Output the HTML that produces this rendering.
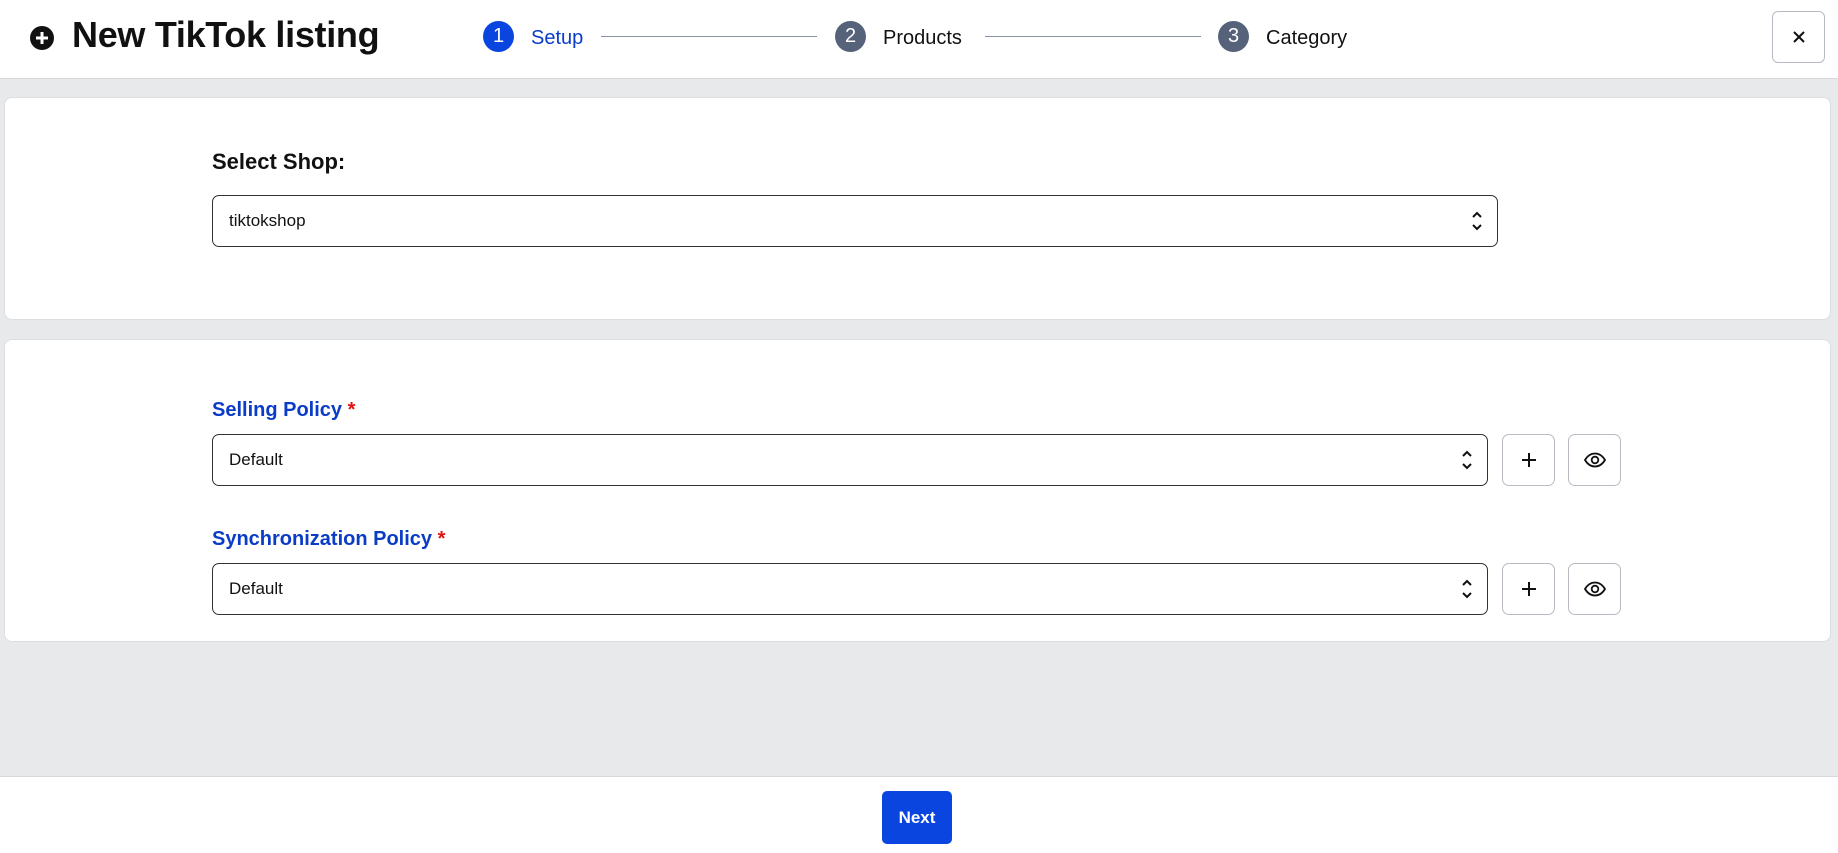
<!DOCTYPE html>
<html><head><meta charset="utf-8"><style>
*{box-sizing:border-box;margin:0;padding:0}
body{width:1838px;height:853px;background:#e8e9eb;font-family:"Liberation Sans",Arial,sans-serif;position:relative;overflow:hidden;color:#111}
.hdr{position:absolute;left:0;top:0;width:1838px;height:79px;background:#fff;border-bottom:1px solid #d6d8dc}
.abs{position:absolute}
.title{left:72px;top:14px;font-size:36px;font-weight:bold;color:#111;letter-spacing:-0.3px}
.circ{width:31px;height:31px;border-radius:50%;color:#fff;font-size:20px;text-align:center;line-height:31px;top:21px}
.st{top:27px;font-size:20px}
.line{height:1px;background:#8a94a6;top:36px}
.card{position:absolute;left:4px;width:1827px;background:#fff;border:1px solid #dcdee2;border-radius:8px}
.sel{position:absolute;left:212px;border:1.5px solid #333;border-radius:7px;background:#fff;font-size:17px;padding-left:16px;display:flex;align-items:center}
.arr{position:absolute;right:14px;top:50%;transform:translateY(-50%)}
.lbl{position:absolute;left:212px;font-size:20px;font-weight:bold;color:#0a3cc8}
.lbl span{color:#e01010}
.btn{position:absolute;width:53px;height:52px;border:1px solid #b8bcc2;border-radius:7px;background:#fff;display:flex;align-items:center;justify-content:center}
.foot{position:absolute;left:0;top:776px;width:1838px;height:77px;background:#fff;border-top:1px solid #d6d8dc}
</style></head><body>
<div class="hdr">
 <svg class="abs" style="left:29px;top:25px" width="26" height="26" viewBox="0 0 26 26"><circle cx="13" cy="13" r="12" fill="#111"/><path d="M13 7v12M7 13h12" stroke="#fff" stroke-width="3"/></svg>
 <div class="abs title">New TikTok listing</div>
 <div class="abs circ" style="left:483px;background:#0b45e0">1</div>
 <div class="abs st" style="left:531px;color:#0a3cc8">Setup</div>
 <div class="abs line" style="left:601px;width:216px"></div>
 <div class="abs circ" style="left:835px;background:#56627a">2</div>
 <div class="abs st" style="left:883px">Products</div>
 <div class="abs line" style="left:985px;width:216px"></div>
 <div class="abs circ" style="left:1218px;background:#56627a">3</div>
 <div class="abs st" style="left:1266px">Category</div>
 <div class="abs" style="left:1772px;top:11px;width:53px;height:52px;border:1px solid #b8bcc2;border-radius:6px;display:flex;align-items:center;justify-content:center">
  <svg width="16" height="16" viewBox="0 0 16 16"><path d="M3 3l10 10M13 3L3 13" stroke="#111" stroke-width="2"/></svg></div>
</div>
<div class="card" style="top:97px;height:223px"></div>
<div class="abs" style="left:212px;top:149px;font-size:22px;font-weight:bold">Select Shop:</div>
<div class="sel" style="top:195px;width:1286px;height:52px">tiktokshop<svg class="arr" width="12" height="24" viewBox="0 0 12 24"><path d="M2 8l4-4 4 4M2 16l4 4 4-4" fill="none" stroke="#111" stroke-width="2"/></svg></div>
<div class="card" style="top:339px;height:303px"></div>
<div class="lbl" style="top:399px">Selling Policy <span>*</span></div>
<div class="sel" style="top:434px;width:1276px;height:52px">Default<svg class="arr" width="12" height="24" viewBox="0 0 12 24"><path d="M2 8l4-4 4 4M2 16l4 4 4-4" fill="none" stroke="#111" stroke-width="2"/></svg></div>
<div class="btn" style="left:1502px;top:434px"><svg width="16" height="16" viewBox="0 0 16 16"><path d="M8 1v14M1 8h14" stroke="#111" stroke-width="2"/></svg></div>
<div class="btn" style="left:1568px;top:434px"><svg width="22" height="16" viewBox="0 0 22 16"><path d="M1 8C4 3 7.5 1.5 11 1.5S18 3 21 8C18 13 14.5 14.5 11 14.5S4 13 1 8Z" fill="none" stroke="#111" stroke-width="1.8"/><circle cx="11" cy="8" r="3.3" fill="none" stroke="#111" stroke-width="1.8"/></svg></div>
<div class="lbl" style="top:528px">Synchronization Policy <span>*</span></div>
<div class="sel" style="top:563px;width:1276px;height:52px">Default<svg class="arr" width="12" height="24" viewBox="0 0 12 24"><path d="M2 8l4-4 4 4M2 16l4 4 4-4" fill="none" stroke="#111" stroke-width="2"/></svg></div>
<div class="btn" style="left:1502px;top:563px"><svg width="16" height="16" viewBox="0 0 16 16"><path d="M8 1v14M1 8h14" stroke="#111" stroke-width="2"/></svg></div>
<div class="btn" style="left:1568px;top:563px"><svg width="22" height="16" viewBox="0 0 22 16"><path d="M1 8C4 3 7.5 1.5 11 1.5S18 3 21 8C18 13 14.5 14.5 11 14.5S4 13 1 8Z" fill="none" stroke="#111" stroke-width="1.8"/><circle cx="11" cy="8" r="3.3" fill="none" stroke="#111" stroke-width="1.8"/></svg></div>
<div class="foot"></div>
<div class="abs" style="left:882px;top:791px;width:70px;height:53px;background:#0b45e0;border-radius:5px;color:#fff;font-weight:bold;font-size:17px;display:flex;align-items:center;justify-content:center">Next</div>
</body></html>
